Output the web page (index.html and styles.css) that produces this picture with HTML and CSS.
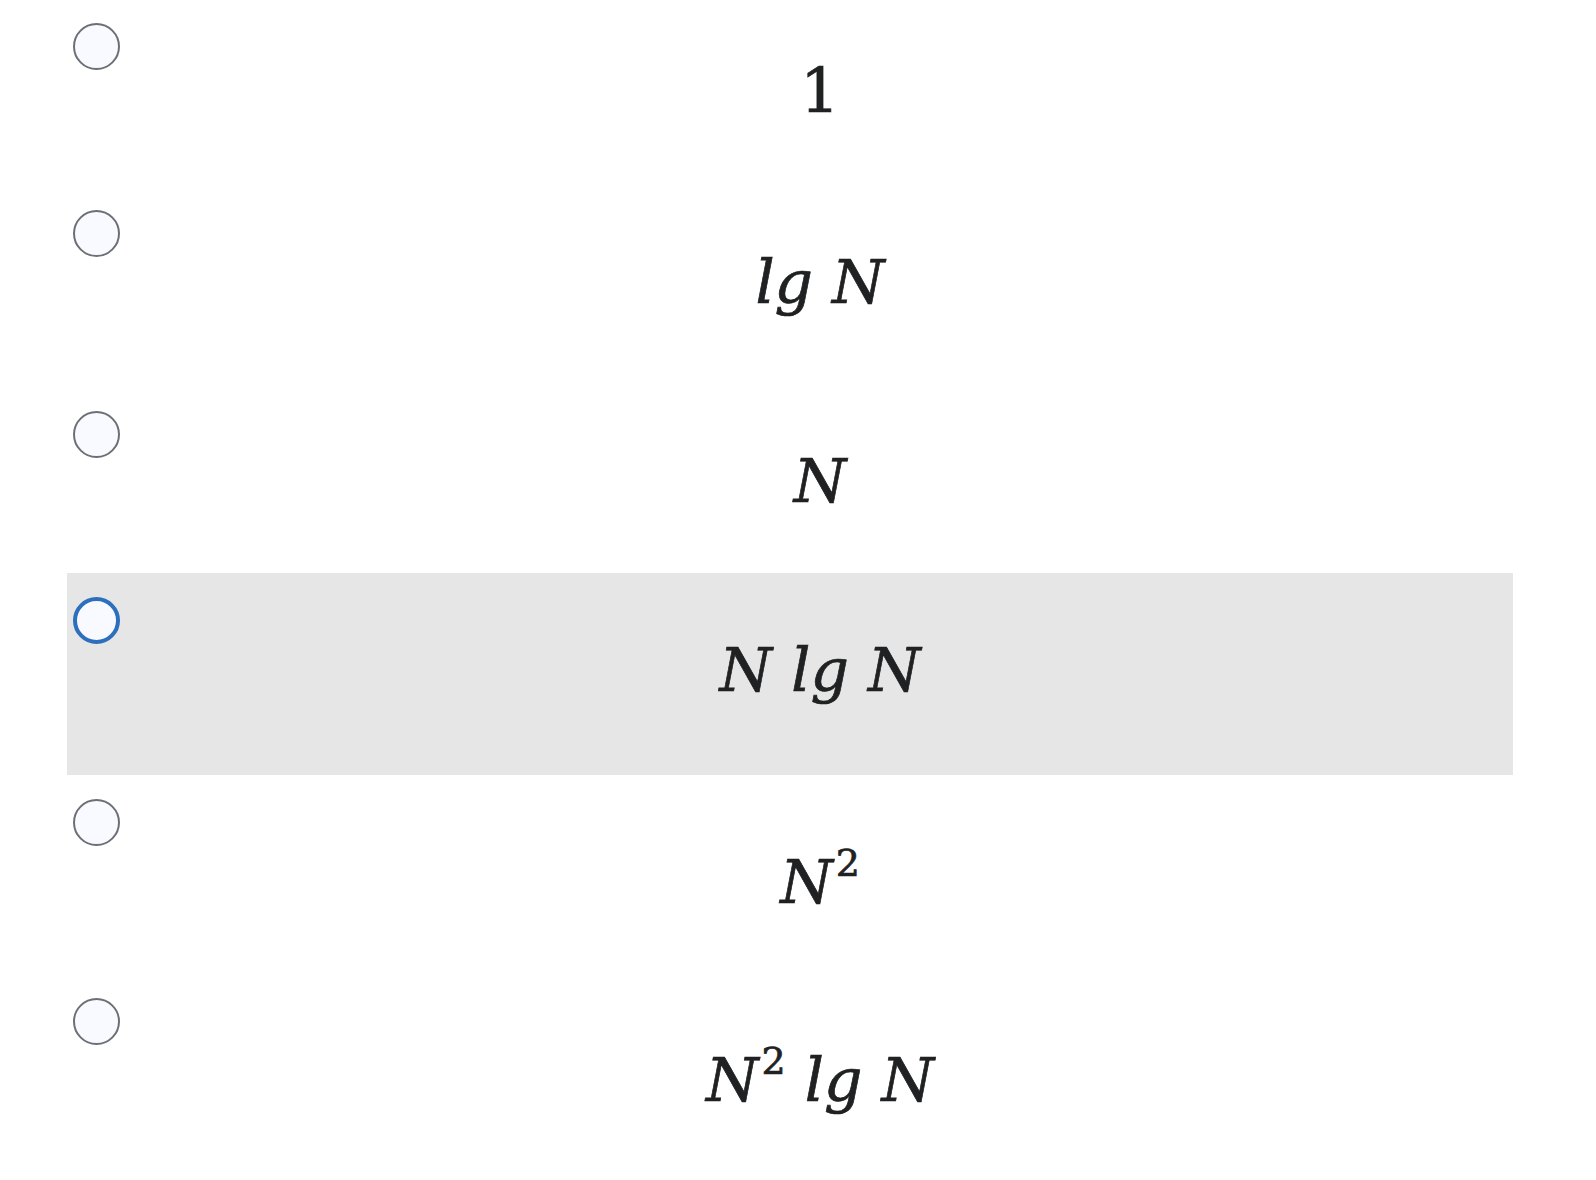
FILE: index.html
```html
<!DOCTYPE html>
<html>
<head>
<meta charset="utf-8">
<link rel="stylesheet" href="styles.css">
</head>
<body>
<div class="list">
  <div class="row r1">
    <span class="radio"></span>
    <div class="label"><span class="num">1</span></div>
  </div>
  <div class="row r2">
    <span class="radio"></span>
    <div class="label"><i>lg</i> <i>N</i></div>
  </div>
  <div class="row r3">
    <span class="radio"></span>
    <div class="label"><i>N</i></div>
  </div>
  <div class="row r4 selected">
    <span class="radio"></span>
    <div class="label"><i>N</i> <i>lg</i> <i>N</i></div>
  </div>
  <div class="row r5">
    <span class="radio"></span>
    <div class="label"><i>N</i><sup class="sup">2</sup></div>
  </div>
  <div class="row r6">
    <span class="radio"></span>
    <div class="label"><i>N</i><sup class="sup">2</sup> <i>lg</i> <i>N</i></div>
  </div>
</div>
</body>
</html>
```

FILE: styles.css
```css
html, body {
  margin: 0;
  padding: 0;
  background: #ffffff;
}

.list {
  margin-left: 67px;
  width: 1446px;
  margin-top: -1px;
  display: flex;
  flex-direction: column;
}

.row {
  display: flex;
  align-items: flex-start;
  box-sizing: border-box;
}

.row.selected {
  background: #e6e6e6;
}

.radio {
  flex: none;
  width: 47px;
  height: 47px;
  box-sizing: border-box;
  border-radius: 50%;
  border: 2px solid #6c7075;
  background: #f8faff;
  margin-left: 6px;
  margin-top: 24px;
}

.selected .radio {
  border: 4px solid #2d6ebd;
}

.label {
  flex: 1;
  margin-left: 7px;
  text-align: center;
  font-family: "DejaVu Serif", "Liberation Serif", serif;
  font-size: 60px;
  line-height: 66px;
  color: #202122;
  -webkit-text-stroke: 0.7px #202122;
}

.label i {
  font-style: italic;
}

.num {
  font-size: 62px;
}

.sup {
  font-size: 38px;
  line-height: 0;
  vertical-align: 27px;
  margin-left: 3px;
}

.r1 { height: 187px; }
.r1 .label { padding-top: 59px; }
.r2 { height: 201px; }
.r2 .label { padding-top: 63px; }
.r3 { height: 186px; }
.r3 .label { padding-top: 61px; }
.r4 { height: 202px; }
.r4 .label { padding-top: 64px; }
.r5 { height: 199px; }
.r5 .label { padding-top: 74px; }
.r6 { height: 215px; }
.r6 .label { padding-top: 73px; }
```
